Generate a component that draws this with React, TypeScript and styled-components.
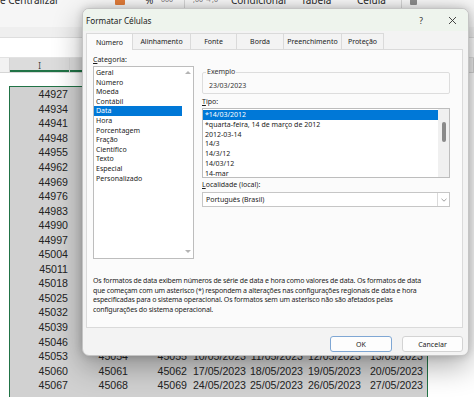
import React from 'react'
import styled, { createGlobalStyle } from 'styled-components'

const GlobalStyle = createGlobalStyle`
  html, body {
    margin: 0;
    padding: 0;
    background: #ffffff;
  }
  body {
    font-family: "Liberation Sans", Arial, sans-serif;
  }
`

const Screen = styled.div`
  position: relative;
  width: 474px;
  height: 397px;
  overflow: hidden;
  background: #ffffff;
  display: flex;
  flex-direction: column;
`

// ---- excel sheet behind the dialog ----

const Ribbon = styled.div`
  flex: none;
  height: 27px;
  background: #f6f6f6;
  display: flex;
  align-items: flex-start;
  overflow: hidden;
  font-family: "Noto Sans", sans-serif;
  font-size: 10px;
  line-height: 12px;
  color: #2b2b2b;
`

const RibbonText = styled.span<{ $w: number; $muted?: boolean }>`
  flex: none;
  width: ${p => p.$w}px;
  margin-top: -6px;
  white-space: nowrap;
  overflow: hidden;
  color: ${p => (p.$muted ? '#6b6b6b' : '#2b2b2b')};
  font-size: ${p => (p.$muted ? 7 : 10)}px;
`

const RibbonIcon = styled.span<{ $color: string; $w: number }>`
  flex: none;
  width: ${p => p.$w}px;
  height: 5px;
  margin-right: 6px;
  background: ${p => p.$color};
  border-radius: 0 0 1px 1px;
`

const RibbonSep = styled.span`
  flex: none;
  width: 1px;
  height: 8px;
  margin: 0 8px;
  background: #d4d4d4;
`

const RibbonEdge = styled.div`
  flex: none;
  height: 10px;
  background: #efefef;
  border-bottom: 1px solid #dedede;
`

const FormulaBar = styled.div`
  flex: none;
  height: 19px;
  background: #ffffff;
  border-bottom: 1px solid #e2e2e2;
`

const HeaderRow = styled.div`
  flex: none;
  height: 14px;
  display: grid;
  grid-template-columns: 10px 60px 60px 59px 59px 58px 58px 63px 1fr;
  background: #f2f2f2;
  border-bottom: 1px solid #d6d6d6;
`

const HeaderCell = styled.div<{ $selected?: boolean }>`
  display: flex;
  align-items: center;
  justify-content: center;
  font-family: "Noto Sans", sans-serif;
  font-size: 8px;
  color: #444;
  border-right: 1px solid #d4d4d4;
  background: ${p => (p.$selected ? '#dcdcdc' : 'transparent')};
  box-shadow: ${p => (p.$selected ? 'inset 0 -2px 0 #217346' : 'none')};
`

const BlankRow = styled.div`
  flex: none;
  height: 13px;
  background: #ffffff;
`

const Sheet = styled.div`
  flex: 1;
  display: flex;
  min-height: 0;
`

const Gutter = styled.div`
  flex: none;
  width: 9px;
  background: #ffffff;
`

const Selection = styled.div`
  flex: none;
  width: 417px;
  border: 1px solid #217346;
  border-bottom: none;
  background: #d1d1d1;
`

const DataRow = styled.div`
  height: 14.55px;
  display: grid;
  grid-template-columns: 60px 60px 59px 59px 58px 58px 63px;
  align-items: center;
`

const Cell = styled.div<{ $pad?: number }>`
  text-align: right;
  padding-right: ${p => p.$pad ?? 2}px;
  font-size: 10.6px;
  line-height: 14px;
  color: #232323;
  white-space: nowrap;
`

const SheetRest = styled.div`
  flex: 1;
  background: #ffffff;
`

// ---- dialog ----

const Dialog = styled.div`
  position: absolute;
  left: 82px;
  top: 8px;
  width: 387px;
  height: 348px;
  box-sizing: border-box;
  border: 1px solid #c4c4c4;
  border-radius: 7px;
  background: #f3f3f3;
  box-shadow: 0 10px 30px rgba(0, 0, 0, 0.33), 0 0 8px rgba(0, 0, 0, 0.18);
  display: flex;
  flex-direction: column;
  overflow: hidden;
  font-family: "Noto Sans", sans-serif;
  color: #1b1b1b;
`

const TitleBar = styled.div`
  flex: none;
  height: 22px;
  display: flex;
  align-items: center;
  padding: 0 0 0 3px;
  background: #eef4ed;
  font-size: 8.2px;
`

const Title = styled.span`
  flex: 1;
`

const TitleButton = styled.span<{ $w: number }>`
  flex: none;
  width: ${p => p.$w}px;
  display: flex;
  align-items: center;
  justify-content: center;
  font-size: 8.5px;
  color: #333;
`

const TabStrip = styled.div`
  flex: none;
  display: flex;
  height: 16px;
  margin: 2px 0 0 3px;
`

const Tab = styled.div<{ $w: number; $active?: boolean }>`
  flex: none;
  width: ${p => p.$w}px;
  box-sizing: border-box;
  display: flex;
  align-items: center;
  justify-content: center;
  font-size: 7px;
  color: #222;
  border: 1px solid #dadada;
  border-bottom: none;
  border-left-width: ${p => (p.$active ? 1 : 0)}px;
  background: ${p => (p.$active ? '#fbfbfb' : '#f3f3f3')};
  margin-bottom: ${p => (p.$active ? -1 : 0)}px;
  position: relative;
  z-index: ${p => (p.$active ? 1 : 0)};
`

const Panel = styled.div`
  flex: none;
  height: 279px;
  margin: 0 5px 0 3px;
  box-sizing: border-box;
  border: 1px solid #dadada;
  background: #fbfbfb;
  padding: 5px 6px 0 6px;
`

const Columns = styled.div`
  display: grid;
  grid-template-columns: 101px 248px;
  column-gap: 8px;
  align-items: start;
`

const Stack = styled.div`
  display: flex;
  flex-direction: column;
`

const Label = styled.div<{ $top?: number }>`
  font-size: 7px;
  line-height: 10px;
  margin-top: ${p => p.$top ?? 0}px;
  color: #1b1b1b;

  u {
    text-decoration-thickness: 0.5px;
    text-underline-offset: 1px;
  }
`

const ListBox = styled.div<{ $h: number; $top?: number }>`
  height: ${p => p.$h}px;
  margin-top: ${p => p.$top ?? 0}px;
  box-sizing: border-box;
  border: 1px solid #bdbdbd;
  background: #ffffff;
  display: grid;
  grid-template-columns: 1fr 11px;
`

const ListItems = styled.div`
  padding-top: 1px;
  overflow: hidden;
`

const ListItem = styled.div<{ $selected?: boolean; $h: number }>`
  height: ${p => p.$h}px;
  line-height: ${p => p.$h}px;
  padding-left: 2px;
  font-size: 7px;
  white-space: nowrap;
  color: ${p => (p.$selected ? '#ffffff' : '#1b1b1b')};
  background: ${p => (p.$selected ? '#0078d7' : 'transparent')};
`

const ArrowTrack = styled.div`
  display: flex;
  flex-direction: column;
  justify-content: space-between;
  align-items: center;
  padding: 4px 0 5px;
`

const Arrow = styled.span<{ $down?: boolean }>`
  width: 0;
  height: 0;
  border-left: 3px solid transparent;
  border-right: 3px solid transparent;
  ${p =>
    p.$down
      ? 'border-top: 3px solid #b4b4b4;'
      : 'border-bottom: 3px solid #b4b4b4;'}
`

const ThumbTrack = styled.div`
  background: #f0f0f0;
  display: flex;
  justify-content: center;
  padding-top: 13px;
`

const Thumb = styled.span`
  width: 4px;
  height: 20px;
  border-radius: 2px;
  background: #8a8a8a;
`

const GroupBox = styled.fieldset`
  margin: 12px 0 0 0;
  padding: 0 3px 2px;
  border: 1px solid #dddddd;
  border-radius: 2px;
  min-width: 0;

  legend {
    padding: 0 1px;
    font-size: 7px;
    line-height: 10px;
    color: #333;
  }
`

const GroupValue = styled.div`
  padding: 4px 0 0 3px;
  font-size: 7px;
  line-height: 10px;
  color: #333;
`

const Select = styled.div`
  height: 15px;
  margin-top: 2px;
  box-sizing: border-box;
  border: 1px solid #c6c6c6;
  background: #ffffff;
  display: grid;
  grid-template-columns: 1fr 12px;
  align-items: center;
`

const SelectText = styled.span`
  padding-left: 3px;
  font-size: 7px;
  color: #1b1b1b;
`

const SelectButton = styled.span`
  height: 100%;
  border-left: 1px solid #dadada;
  display: flex;
  align-items: center;
  justify-content: center;
`

const Description = styled.div`
  margin-top: 17px;
  font-size: 7px;
  line-height: 9.6px;
  letter-spacing: -0.17px;
  color: #1b1b1b;
  white-space: nowrap;
`

const Footer = styled.div`
  flex: 1;
  display: flex;
  justify-content: flex-end;
  align-items: flex-start;
  gap: 10px;
  padding: 8px 5px 0 0;
`

const Button = styled.button<{ $w: number; $primary?: boolean }>`
  width: ${p => p.$w}px;
  height: 16px;
  padding: 0;
  border-radius: 3px;
  border: 1px solid ${p => (p.$primary ? '#7fa7d4' : '#d3d3d3')};
  background: #fdfdfd;
  font-family: "Noto Sans", sans-serif;
  font-size: 7px;
  color: #1b1b1b;
`

const pad = (n: number) => String(n).padStart(2, '0')

const serialToDate = (serial: number) => {
  const d = new Date(Date.UTC(1899, 11, 30) + serial * 86400000)
  return `${pad(d.getUTCDate())}/${pad(d.getUTCMonth() + 1)}/${d.getUTCFullYear()}`
}

const rows = Array.from({ length: 21 }, (_, i) => 44927 + i * 7)

const categories = [
  'Geral', 'Número', 'Moeda', 'Contábil', 'Data', 'Hora', 'Porcentagem',
  'Fração', 'Científico', 'Texto', 'Especial', 'Personalizado',
]

const dateTypes = [
  '*14/03/2012',
  '*quarta-feira, 14 de março de 2012',
  '2012-03-14',
  '14/3',
  '14/3/12',
  '14/03/12',
  '14-mar',
]

const tabs: [string, number][] = [
  ['Número', 47],
  ['Alinhamento', 58],
  ['Fonte', 46],
  ['Borda', 47],
  ['Preenchimento', 58],
  ['Proteção', 42],
]

const CloseIcon = () => (
  <svg width="9" height="9" viewBox="0 0 9 9">
    <path d="M1 1 L8 8 M8 1 L1 8" stroke="#333" strokeWidth="0.9" />
  </svg>
)

const Chevron = () => (
  <svg width="6" height="4" viewBox="0 0 6 4">
    <path d="M0.5 0.8 L3 3.2 L5.5 0.8" stroke="#777" strokeWidth="0.7" fill="none" />
  </svg>
)

export default function App() {
  return (
    <Screen>
      <GlobalStyle />

      <Ribbon>
        <RibbonText $w={58}>e Centralizar</RibbonText>
        <RibbonText $w={57}>ˇ</RibbonText>
        <RibbonIcon $color="#e07b39" $w={10} />
        <RibbonText $w={14}>'</RibbonText>
        <RibbonText $w={16}>%</RibbonText>
        <RibbonText $w={15} $muted>000</RibbonText>
        <RibbonSep />
        <RibbonText $w={12} $muted>,00</RibbonText>
        <RibbonText $w={26} $muted>→,0</RibbonText>
        <RibbonText $w={70}>Condicional</RibbonText>
        <RibbonText $w={56}>Tabela</RibbonText>
        <RibbonText $w={36}>Célula</RibbonText>
        <RibbonSep />
        <RibbonIcon $color="#8c8c8c" $w={7} />
      </Ribbon>
      <RibbonEdge />
      <FormulaBar />

      <HeaderRow>
        <HeaderCell />
        <HeaderCell $selected>I</HeaderCell>
        <HeaderCell $selected>J</HeaderCell>
        <HeaderCell $selected>K</HeaderCell>
        <HeaderCell $selected>L</HeaderCell>
        <HeaderCell $selected>M</HeaderCell>
        <HeaderCell $selected>N</HeaderCell>
        <HeaderCell $selected>O</HeaderCell>
        <HeaderCell />
      </HeaderRow>
      <BlankRow />

      <Sheet>
        <Gutter />
        <Selection>
          {rows.map(n => (
            <DataRow key={n}>
              <Cell>{n}</Cell>
              <Cell>{n + 1}</Cell>
              <Cell>{n + 2}</Cell>
              <Cell>{serialToDate(n + 3)}</Cell>
              <Cell $pad={3}>{serialToDate(n + 4)}</Cell>
              <Cell $pad={3}>{serialToDate(n + 5)}</Cell>
              <Cell $pad={4}>{serialToDate(n + 6)}</Cell>
            </DataRow>
          ))}
        </Selection>
        <SheetRest />
      </Sheet>

      <Dialog>
        <TitleBar>
          <Title>Formatar Células</Title>
          <TitleButton $w={40}>?</TitleButton>
          <TitleButton $w={22}>
            <CloseIcon />
          </TitleButton>
          <TitleButton $w={5} />
        </TitleBar>

        <TabStrip>
          {tabs.map(([name, w], i) => (
            <Tab key={name} $w={w} $active={i === 0}>
              {name}
            </Tab>
          ))}
        </TabStrip>

        <Panel>
          <Columns>
            <Stack>
              <Label>
                <u>C</u>ategoria:
              </Label>
              <ListBox $h={193} $top={1}>
                <ListItems>
                  {categories.map(c => (
                    <ListItem key={c} $h={9.6} $selected={c === 'Data'}>
                      {c}
                    </ListItem>
                  ))}
                </ListItems>
                <ArrowTrack>
                  <Arrow />
                  <Arrow $down />
                </ArrowTrack>
              </ListBox>
            </Stack>

            <Stack>
              <GroupBox>
                <legend>Exemplo</legend>
                <GroupValue>23/03/2023</GroupValue>
              </GroupBox>

              <Label $top={3}>
                <u>T</u>ipo:
              </Label>
              <ListBox $h={70} $top={1}>
                <ListItems>
                  {dateTypes.map((t, i) => (
                    <ListItem key={t} $h={9.8} $selected={i === 0}>
                      {t}
                    </ListItem>
                  ))}
                </ListItems>
                <ThumbTrack>
                  <Thumb />
                </ThumbTrack>
              </ListBox>

              <Label $top={2}>
                <u>L</u>ocalidade (local):
              </Label>
              <Select>
                <SelectText>Português (Brasil)</SelectText>
                <SelectButton>
                  <Chevron />
                </SelectButton>
              </Select>
            </Stack>
          </Columns>

          <Description>
            Os formatos de data exibem números de série de data e hora como valores de data. Os formatos de data
            <br />
            que começam com um asterisco (*) respondem a alterações nas configurações regionais de data e hora
            <br />
            especificadas para o sistema operacional. Os formatos sem um asterisco não são afetados pelas
            <br />
            configurações do sistema operacional.
          </Description>
        </Panel>

        <Footer>
          <Button $w={62} $primary>OK</Button>
          <Button $w={61}>Cancelar</Button>
        </Footer>
      </Dialog>
    </Screen>
  )
}
